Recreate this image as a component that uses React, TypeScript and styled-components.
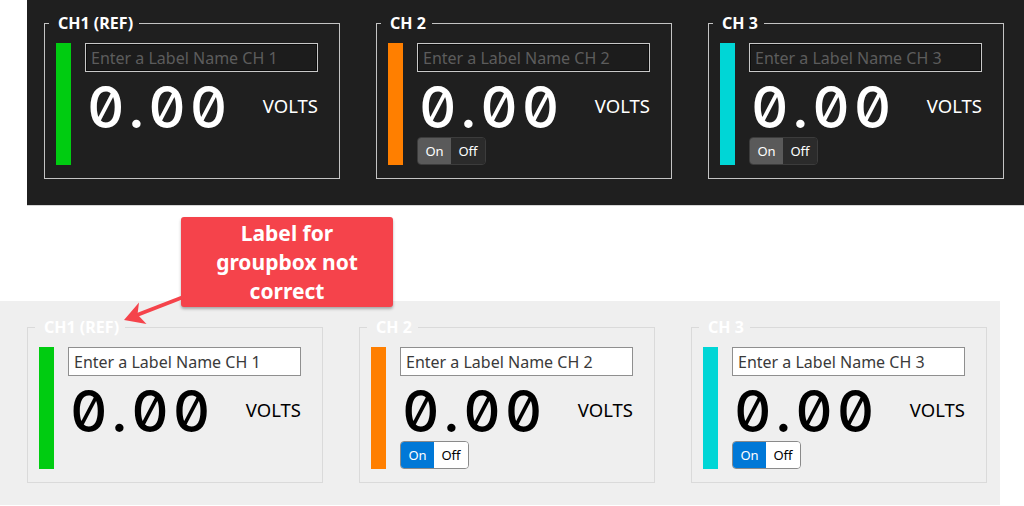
import styled, { createGlobalStyle } from 'styled-components'

const GlobalStyle = createGlobalStyle`
    body {
        margin: 0;
        background: #ffffff;
        font-family: "Noto Sans", "Open Sans", sans-serif;
    }
`

const Pagina = styled.div`
    width: 1024px;
    height: 506px;
    overflow: hidden;
`

const PanelOscuro = styled.div`
    margin-left: 27px;
    height: 206px;
    box-sizing: border-box;
    padding: 13px 0 0 17px;
    background-color: #1f1f1f;
    border-bottom: 1px solid #d6d6d6;
    display: flex;
    gap: 36px;
`

const Separador = styled.div`
    position: relative;
    height: 95px;
`

const PanelClaro = styled.div`
    width: 1000px;
    height: 204px;
    box-sizing: border-box;
    padding: 16px 0 0 27px;
    background-color: #efefef;
    display: flex;
    gap: 36px;
`

const Grupo = styled.fieldset<{ $claro?: boolean }>`
    margin: 0;
    width: 296px;
    height: 166px;
    box-sizing: border-box;
    padding: 10px 21px 12px 11px;
    border: 1px solid ${p => (p.$claro ? '#dadada' : '#c4c4c4')};
    min-width: 0;
`

const Leyenda = styled.legend<{ $claro?: boolean }>`
    margin-left: ${p => (p.$claro ? '-4px' : '-7px')};
    padding: 0 6px 0 9px;
    font-size: 16px;
    line-height: 20px;
    font-weight: bold;
    color: #ffffff;
`

const Fila = styled.div`
    display: flex;
    height: 122px;
`

const Barra = styled.div<{ $color: string }>`
    width: 15px;
    flex: none;
    margin-right: 14px;
    background-color: ${p => p.$color};
`

const Columna = styled.div`
    flex: 1;
    display: flex;
    flex-direction: column;
`

const Entrada = styled.input<{ $claro?: boolean }>`
    height: 29px;
    box-sizing: border-box;
    width: 100%;
    padding: 0 5px;
    font-family: "Noto Sans", sans-serif;
    font-size: 16px;
    background-color: ${p => (p.$claro ? '#ffffff' : '#1c1c1c')};
    border: 1px solid ${p => (p.$claro ? '#8f8f8f' : '#c8c8c8')};
    box-shadow: ${p => (p.$claro ? 'none' : 'inset 0 0 0 1px #0c0c0c')};
    outline: none;
    &::placeholder {
        color: ${p => (p.$claro ? '#3a3a3a' : '#5c5c5c')};
    }
`

const Lectura = styled.div`
    display: flex;
    align-items: center;
    justify-content: space-between;
    margin-top: 6px;
`

const Numero = styled.span<{ $claro?: boolean }>`
    font-family: Inter, "DejaVu Sans Mono", monospace;
    font-size: 58px;
    line-height: 58px;
    font-weight: 500;
    letter-spacing: 4px;
    margin-left: 2px;
    font-variant-numeric: slashed-zero tabular-nums;
    font-feature-settings: "zero", "tnum";
    color: ${p => (p.$claro ? '#000000' : '#ffffff')};
`

const Unidad = styled.span<{ $claro?: boolean }>`
    font-size: 18.5px;
    line-height: 24px;
    margin-top: -3px;
    color: ${p => (p.$claro ? '#000000' : '#ffffff')};
`

const Interruptor = styled.div<{ $claro?: boolean }>`
    margin-top: auto;
    display: flex;
    width: fit-content;
    height: 28px;
    box-sizing: border-box;
    border-radius: 4px;
    overflow: hidden;
    border: 1px solid ${p => (p.$claro ? '#8a8a8a' : '#3c3c3c')};
`

const Opcion = styled.span<{ $claro?: boolean; $activo?: boolean }>`
    width: ${p => (p.$activo ? '33px' : '34px')};
    display: flex;
    align-items: center;
    justify-content: center;
    font-size: 13px;
    color: ${p => (p.$claro && !p.$activo ? '#000000' : '#ffffff')};
    background-color: ${p =>
        p.$claro ? (p.$activo ? '#0078d7' : '#ffffff') : p.$activo ? '#5a5a5a' : '#2b2b2b'};
`

const Globo = styled.div`
    position: absolute;
    left: 181px;
    top: 11px;
    width: 212px;
    height: 90px;
    z-index: 2;
    box-sizing: border-box;
    padding-top: 2px;
    background-color: #f5434b;
    border-radius: 3px;
    box-shadow: 0 2px 3px rgba(0, 0, 0, 0.3);
    color: #ffffff;
    font-size: 21px;
    line-height: 29px;
    font-weight: bold;
    text-align: center;
`

const Flecha = styled.svg`
    position: absolute;
    left: 120px;
    top: 84px;
    z-index: 2;
    overflow: visible;
`

const canales = [
    { titulo: 'CH1 (REF)', n: 1, color: '#00cc11', toggle: false },
    { titulo: 'CH 2', n: 2, color: '#ff7f00', toggle: true },
    { titulo: 'CH 3', n: 3, color: '#00d6d6', toggle: true },
]

function Canal({ c, claro }: { c: typeof canales[number]; claro?: boolean }) {
    return (
        <Grupo $claro={claro}>
            <Leyenda $claro={claro}>{c.titulo}</Leyenda>
            <Fila>
                <Barra $color={c.color} />
                <Columna>
                    <Entrada $claro={claro} placeholder={`Enter a Label Name CH ${c.n}`} />
                    <Lectura>
                        <Numero $claro={claro}>0.00</Numero>
                        <Unidad $claro={claro}>VOLTS</Unidad>
                    </Lectura>
                    {c.toggle && (
                        <Interruptor $claro={claro}>
                            <Opcion $claro={claro} $activo>On</Opcion>
                            <Opcion $claro={claro}>Off</Opcion>
                        </Interruptor>
                    )}
                </Columna>
            </Fila>
        </Grupo>
    )
}

function App() {
    return (
        <Pagina>
            <GlobalStyle />
            <PanelOscuro>
                {canales.map(c => <Canal key={c.n} c={c} />)}
            </PanelOscuro>
            <Separador>
                <Globo>
                    Label for
                    <br />
                    groupbox not
                    <br />
                    correct
                </Globo>
                <Flecha width="70" height="40" viewBox="0 0 70 40">
                    <line x1="66" y1="6" x2="17" y2="25" stroke="#f5434b" strokeWidth="4" />
                    <polygon points="4,30 19,12.5 17.5,24.5 26.5,34" fill="#f5434b" />
                </Flecha>
            </Separador>
            <PanelClaro>
                {canales.map(c => <Canal key={c.n} c={c} claro />)}
            </PanelClaro>
        </Pagina>
    )
}

export default App
